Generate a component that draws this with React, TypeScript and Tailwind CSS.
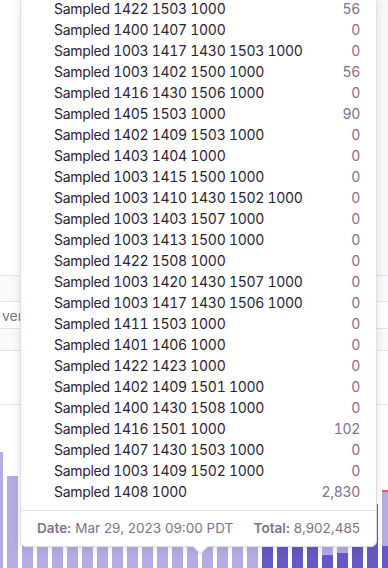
import React from 'react';

const rows: [string, string][] = [
  ['Sampled 1422 1503 1000', '56'],
  ['Sampled 1400 1407 1000', '0'],
  ['Sampled 1003 1417 1430 1503 1000', '0'],
  ['Sampled 1003 1402 1500 1000', '56'],
  ['Sampled 1416 1430 1506 1000', '0'],
  ['Sampled 1405 1503 1000', '90'],
  ['Sampled 1402 1409 1503 1000', '0'],
  ['Sampled 1403 1404 1000', '0'],
  ['Sampled 1003 1415 1500 1000', '0'],
  ['Sampled 1003 1410 1430 1502 1000', '0'],
  ['Sampled 1003 1403 1507 1000', '0'],
  ['Sampled 1003 1413 1500 1000', '0'],
  ['Sampled 1422 1508 1000', '0'],
  ['Sampled 1003 1420 1430 1507 1000', '0'],
  ['Sampled 1003 1417 1430 1506 1000', '0'],
  ['Sampled 1411 1503 1000', '0'],
  ['Sampled 1401 1406 1000', '0'],
  ['Sampled 1422 1423 1000', '0'],
  ['Sampled 1402 1409 1501 1000', '0'],
  ['Sampled 1400 1430 1508 1000', '0'],
  ['Sampled 1416 1501 1000', '102'],
  ['Sampled 1407 1430 1503 1000', '0'],
  ['Sampled 1003 1409 1502 1000', '0'],
  ['Sampled 1408 1000', '2,830'],
];

// [light, dark, release marker]
const bars: [number, number, boolean][] = [
  [116, 0, false], [92, 0, false], [70, 0, false], [64, 0, false], [78, 0, false],
  [72, 0, false], [60, 0, false], [66, 0, false], [80, 0, false], [74, 0, false],
  [68, 0, false], [62, 0, false], [70, 0, false], [76, 0, false], [58, 0, false],
  [64, 0, false], [72, 0, false], [68, 0, false], [10, 60, false], [0, 55, false],
  [0, 62, false], [8, 50, false], [40, 13, false], [45, 15, false], [0, 58, false],
  [0, 64, false], [54, 22, true],
];

const Chart = () => (
  <div className="h-[128px] flex items-end gap-[4px] -ml-[8px] overflow-hidden">
    {bars.map(([light, dark, release], i) => (
      <div key={i} className="w-[11px] shrink-0 flex flex-col">
        {release && <div className="h-[2px] bg-[#f55459]" />}
        <div className="bg-[#b4ade3]" style={{ height: light }} />
        <div className="bg-[#6559c5]" style={{ height: dark }} />
      </div>
    ))}
  </div>
);

const Tooltip = () => (
  <div className="absolute left-[20px] right-[11px] bottom-[21px] bg-white border border-[#e0dce5] rounded-md shadow-[0_2px_10px_rgba(43,34,51,0.12)]">
    <div className="pb-2 tabular-nums tracking-[-0.3px]">
      {rows.map(([label, value], i) => (
        <div key={i} className="h-[21px] flex items-center justify-between pl-[33px] pr-4">
          <span className="text-[#2b2233]">{label}</span>
          <span className="text-[#80708f]">{value}</span>
        </div>
      ))}
    </div>
    <div className="h-[36px] border-t border-[#e7e1ec] flex items-center justify-between px-4 text-[13.5px] text-[#80708f]">
      <span>
        <span className="font-semibold">Date:</span> Mar 29, 2023 09:00 PDT
      </span>
      <span>
        <span className="font-semibold">Total:</span> 8,902,485
      </span>
    </div>
    <div className="absolute left-[174px] -bottom-[6px] w-[11px] h-[11px] rotate-45 bg-white border-r border-b border-[#e0dce5]" />
  </div>
);

const App: React.FC = () => {
  return (
    <div
      className="relative w-[388px] h-[568px] overflow-hidden bg-white text-[14px]"
      style={{ fontFamily: 'Inter, "Noto Sans", sans-serif' }}
    >
      <div className="h-[275px] flex">
        <div className="flex-1" />
        <div className="w-[11px] bg-[#f8f7fa]" />
      </div>
      <div className="h-[27px] bg-[#faf9fb] border-y border-[#e7e1ec]" />
      <div className="h-[27px] border-b border-[#e7e1ec] flex items-center pl-[2px] text-[#80708f]">
        vement
      </div>
      <div className="h-[22px] bg-[#faf9fb] border-b border-[#e7e1ec]" />
      <div className="h-[54px] border-b border-[#e7e1ec]" />
      <div className="h-[35px]" />
      <Chart />
      <Tooltip />
    </div>
  );
};

export default App;
